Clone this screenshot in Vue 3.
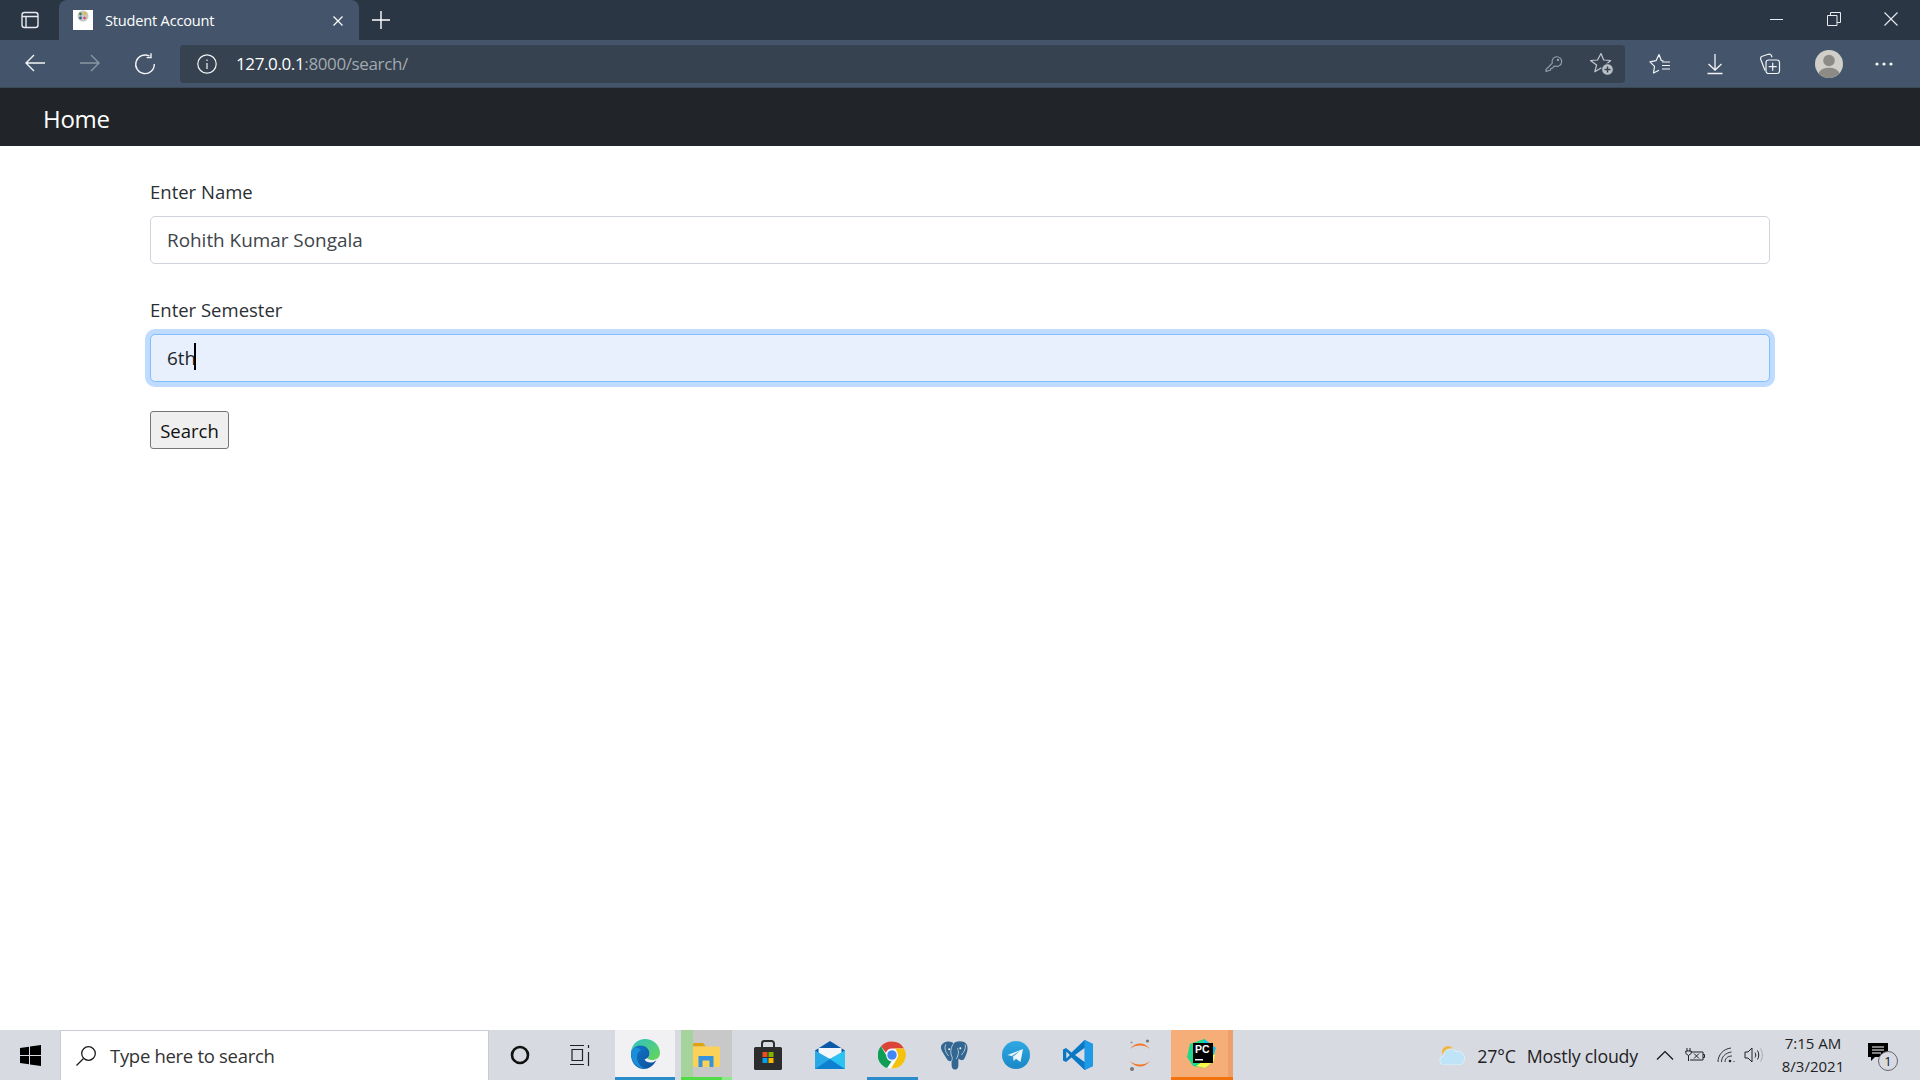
<script setup>
const inputs = [
  { id: 'name', label: 'Enter Name', value: 'Rohith Kumar Songala', focused: false },
  { id: 'sem', label: 'Enter Semester', value: '6th', focused: true },
]
</script>

<template>
  <div class="screen">
    <header class="chrome">
      <div class="tabstrip">
        <div class="strip-btn">
          <svg width="20" height="20" viewBox="0 0 20 20" fill="none" stroke="#e6e9ed" stroke-width="1.4"><rect x="2" y="2.5" width="16" height="15" rx="2.5"/><path d="M2 6.5h16M6 6.5v11"/></svg>
        </div>
        <div class="tab">
          <span class="favicon">
            <svg width="20" height="20" viewBox="0 0 20 20"><rect width="20" height="20" fill="#fff"/><circle cx="10" cy="6" r="5.500" fill="#c9c7bf"/><circle cx="7.500" cy="4" r="1.400" fill="#3f7d5d"/><circle cx="12" cy="3.500" r="1.400" fill="#e0bb3a"/><circle cx="7.500" cy="8" r="1.400" fill="#2f5f9e"/><circle cx="11.500" cy="8" r="1.300" fill="#d8467d"/></svg>
          </span>
          <span class="tab-title">Student Account</span>
          <svg class="tab-close" width="12" height="12" viewBox="0 0 12 12" stroke="#fff" stroke-width="1.2"><path d="M1.5 1.5l9 9M10.5 1.5l-9 9"/></svg>
        </div>
        <div class="newtab">
          <svg width="18" height="18" viewBox="0 0 18 18" stroke="#fff" stroke-width="1.4"><path d="M9 0v18M0 9h18"/></svg>
        </div>
        <div class="winctrls">
          <span class="win"><svg width="14" height="14" viewBox="0 0 14 14" stroke="#e8ebee" stroke-width="1"><path d="M0 7.5h13"/></svg></span>
          <span class="win"><svg width="14" height="14" viewBox="0 0 14 14" fill="none" stroke="#e8ebee" stroke-width="1"><path d="M.5 3.5h9.5v10H.5zM3.500 3.500V.5h10v10H10"/></svg></span>
          <span class="win"><svg width="14" height="14" viewBox="0 0 14 14" stroke="#e8ebee" stroke-width="1.1"><path d="M.5.500l13 13M13.500.5l-13 13"/></svg></span>
        </div>
      </div>
      <div class="toolbar">
        <div class="nav-btns">
          <span class="nav"><svg width="22" height="20" viewBox="0 0 22 20" fill="none" stroke="#f2f4f6" stroke-width="1.400"><path d="M21 10H2M10 2l-8 8 8 8"/></svg></span>
          <span class="nav"><svg width="22" height="20" viewBox="0 0 22 20" fill="none" stroke="#8b96a4" stroke-width="1.400"><path d="M1 10h19M12 2l8 8-8 8"/></svg></span>
          <span class="nav"><svg width="22" height="22" viewBox="0 0 22 22" fill="none" stroke="#f2f4f6" stroke-width="1.400"><path d="M15.500 3.200A9.300 9.300 0 1 0 20.300 11"/><path d="M15.800 .5v4.400h-4.400" transform="translate(1.200 -.3)"/></svg></span>
        </div>
        <div class="address">
          <svg class="info" width="20" height="20" viewBox="0 0 20 20" fill="none" stroke="#f2f4f6" stroke-width="1.200"><circle cx="10" cy="10" r="9.200"/><path d="M10 9v6M10 5.500v1.500"/></svg>
          <span class="url"><span class="host">127.0.0.1</span><span class="rest">:8000/search/</span></span>
          <div class="addr-actions">
            <svg width="18" height="18" viewBox="0 0 18 18" fill="none" stroke="#98a2ad" stroke-width="1.100"><path d="M1 16.500v-2l6.300-6.400a4.800 4.800 0 1 1 3 3l-1.800.300-.6 1.600-2 .4-.4 1.600-1.500.5z"/><circle cx="13" cy="5" r=".6" fill="#98a2ad"/></svg>
            <svg width="24" height="24" viewBox="0 0 24 24" fill="none"><path d="M11 1.500l2.700 6.500 7 .5-5.300 4.500 1.800 6.800-6.200-3.700-6.200 3.700 1.800-6.800L.5 8.500l7-.5z" stroke="#c2c8cf" stroke-width="1.200" stroke-linejoin="round"/><circle cx="17.500" cy="17.500" r="5.800" fill="#b9bfc6" stroke="#36424f" stroke-width="1"/><path d="M17.500 14.500v6M14.500 17.500h6" stroke="#36424f" stroke-width="1.400"/></svg>
          </div>
        </div>
        <div class="tool-icons">
          <span class="tool"><svg width="22" height="22" viewBox="0 0 22 22" fill="none" stroke="#f2f4f6" stroke-width="1.200" stroke-linejoin="round"><path d="M14.500 7.800L12.300 7.500 10 1.500 7 7.700 1 8.800l4.500 4.500L4.500 20l5.500-2.800"/><path d="M13 9h8M13 12.500h8M13 16h8"/></svg></span>
          <span class="tool"><svg width="18" height="22" viewBox="0 0 18 22" fill="none" stroke="#f2f4f6" stroke-width="1.300"><path d="M9 1v16M2.500 11L9 17l6.500-6M1.500 20.500h15"/></svg></span>
          <span class="tool"><svg width="22" height="22" viewBox="0 0 22 22" fill="none" stroke="#f2f4f6" stroke-width="1.200"><path d="M6 17.500L1.800 6.500c-.5-1.500 0-2.700 1.500-3.200l6-2c1.500-.4 2.600 0 3.200 1.500l.5 1.500"/><rect x="7" y="7" width="13.500" height="13.500" rx="2.500"/><path d="M13.700 9.700v8M9.700 13.700h8"/></svg></span>
          <span class="tool avatar"><svg width="28" height="28" viewBox="0 0 28 28"><circle cx="14" cy="14" r="14" fill="#d0cfca"/><circle cx="14" cy="10.500" r="5.800" fill="#8d8b85"/><path d="M3.500 23.200C5.500 19.300 9 17.800 14 17.800s8.500 1.500 10.500 5.400A14 14 0 0 1 14 28a14 14 0 0 1-10.500-4.800z" fill="#8d8b85"/></svg></span>
          <span class="tool"><svg width="18" height="4" viewBox="0 0 18 4" fill="#f2f4f6"><circle cx="2" cy="2" r="1.600"/><circle cx="9" cy="2" r="1.600"/><circle cx="16" cy="2" r="1.600"/></svg></span>
        </div>
      </div>
    </header>

    <nav class="navbar"><a class="brand">Home</a></nav>

    <main class="page">
      <form class="form" @submit.prevent>
        <div v-for="f in inputs" :key="f.id" class="group">
          <label class="label" :for="f.id">{{ f.label }}</label>
          <div class="field-wrap">
            <input :id="f.id" class="field" :class="{ focused: f.focused }" :value="f.value" readonly />
            <span v-if="f.focused" class="caret"></span>
          </div>
        </div>
        <button class="search-btn" type="button">Search</button>
      </form>
    </main>

    <footer class="taskbar">
      <div class="tb-start">
        <svg width="21" height="21" viewBox="0 0 21 21" fill="#000"><path d="M0 3l9-1.300V10H0zM10 1.500L21 0v10H10zM0 11h9v8.300L0 18zM10 11h11v10l-11-1.500z"/></svg>
      </div>
      <div class="tb-search">
        <svg width="22" height="22" viewBox="0 0 22 22" fill="none" stroke="#1a1a1a" stroke-width="1.300"><circle cx="13.500" cy="8.500" r="6.800"/><path d="M8.500 13.500L1.500 20.500"/></svg>
        <span>Type here to search</span>
      </div>
      <div class="tb-slot">
        <svg width="20" height="20" viewBox="0 0 20 20" fill="none" stroke="#111" stroke-width="2.600"><circle cx="10" cy="10" r="8"/></svg>
      </div>
      <div class="tb-slot taskview">
        <svg width="22" height="22" viewBox="0 0 22 22" fill="none" stroke="#222" stroke-width="1.200"><path d="M1 1.500h14M1 20.500h14M3 5.500h10.500v11H3zM19.500 1v3M19.500 8v14"/></svg>
      </div>

      <div class="tb-slot edge">
        <svg width="32" height="32" viewBox="0 0 32 32">
          <defs>
            <linearGradient id="edgeA" x1="0" y1="0" x2="1" y2="1"><stop offset="0" stop-color="#2cc1c4"/><stop offset="1" stop-color="#69d653"/></linearGradient>
            <linearGradient id="edgeB" x1="0" y1="0" x2="1" y2="1"><stop offset="0" stop-color="#1277c9"/><stop offset="1" stop-color="#0c4f9c"/></linearGradient>
          </defs>
          <path d="M2 14C3 6 9 1 16 1c8 0 15 6 15 14 0 5-4 7-8 7-3 0-5-1-5-2.500 2-1 2.500-2.500 2.500-4 0-4-4-7-8-7-5 0-9 2-10.500 5.500z" fill="url(#edgeA)"/>
          <path d="M20.500 15.500c0 3-2 5-5 6 2 4 9 4 12 .5-3 6-8 9-12.500 9C8 31 1 25 2 14c1.500-4 5.500-6.500 9.500-6.500 5 0 9 3.500 9 8z" fill="url(#edgeB)"/>
          <path d="M12 12c-4 2-5 7-3 12 1.500 3.500 4 6 8 6.500C9 31 2 25 2 14c2-4 6-6 10-2z" fill="#1a8fd8"/>
        </svg>
      </div>
      <div class="tb-slot explorer">
        <svg width="27" height="24" viewBox="0 0 27 24">
          <path d="M0 1.500A1.500 1.500 0 0 1 1.500 0H10l3 3.500H0z" fill="#e0a30d"/>
          <path d="M0 3.500h25.500A1.500 1.500 0 0 1 27 5v17.500a1.500 1.500 0 0 1-1.500 1.500H1.500A1.500 1.500 0 0 1 0 22.500z" fill="#fcd15a"/>
          <path d="M5.500 24V13h15v11h-4v-6.500h-7V24z" fill="#3592dc"/>
        </svg>
      </div>
      <div class="tb-slot">
        <svg width="28" height="30" viewBox="0 0 28 30">
          <path d="M8 8V3.500A2.500 2.500 0 0 1 10.500 1h7A2.500 2.500 0 0 1 20 3.500V8" fill="none" stroke="#2e2e2e" stroke-width="2"/>
          <rect y="7" width="28" height="23" rx="1.500" fill="#2d2d2d"/>
          <rect x="8.500" y="12" width="5" height="5" fill="#e8501f"/><rect x="14.500" y="12" width="5" height="5" fill="#7fb400"/>
          <rect x="8.500" y="18" width="5" height="5" fill="#00a1ef"/><rect x="14.500" y="18" width="5" height="5" fill="#ffb800"/>
        </svg>
      </div>
      <div class="tb-slot">
        <svg width="30" height="28" viewBox="0 0 30 28">
          <path d="M0 9.500L15 0l15 9.500V14H0z" fill="#0b5aa8"/>
          <path d="M3.500 7h23v10h-23z" fill="#f3f6fa"/>
          <path d="M0 9.500L15 18l15-8.500V28H0z" fill="#29a8e8"/>
          <path d="M0 28l15-10 15 10z" fill="#0f7fd0"/>
          <path d="M30 9.500V28L15 18z" fill="#2cc3f2"/>
        </svg>
      </div>
      <div class="tb-slot chrome-app">
        <svg width="28" height="28" viewBox="0 0 30 30">
          <circle cx="15" cy="15" r="14.500" fill="#fff"/>
          <path d="M15 .5A14.500 14.500 0 0 1 28 8H15a7 7 0 0 0-6.500 4.500L3.200 5.700A14.500 14.500 0 0 1 15 .5z" fill="#db4437"/>
          <path d="M3.200 5.700L9 15.500a7 7 0 0 0 5.500 6.500L9.700 29A14.500 14.500 0 0 1 3.200 5.700z" fill="#0f9d58"/>
          <path d="M28 8a14.500 14.500 0 0 1-13 21.500h-1l6-10.300A7 7 0 0 0 20 11L18.800 8z" fill="#f4c20d"/>
          <circle cx="15" cy="15" r="5.500" fill="#4285f4" stroke="#e8eefc" stroke-width="1"/>
        </svg>
      </div>
      <div class="tb-slot">
        <svg width="29" height="30" viewBox="0 0 30 30">
          <path d="M3 3C7 0 12 1 14 3c3-3 10-3 13 0 3 4 1 10-1 14-1 3-3 4-5 3l-2-1v7c0 3-2 4-3.500 4-2.500 0-3.500-2-3.500-5v-4c-2 1-4 0-5-2C5 15 1 11 1 7c0-2 1-3 2-4z" fill="#336791"/>
          <path d="M14 3c-2 3-4 8-2 13 1 2 1 3 0 5M18 8c2 3 1 7-1 11M6 4C4 8 6 13 9 16M26 4c1 4-1 8-4 11" fill="none" stroke="#c8d6e2" stroke-width=".9"/>
          <circle cx="9.500" cy="9" r="1" fill="#fff"/><circle cx="21" cy="8" r="1" fill="#fff"/>
        </svg>
      </div>
      <div class="tb-slot">
        <svg width="28" height="28" viewBox="0 0 28 28">
          <defs><linearGradient id="tg" x1="0" y1="0" x2="0" y2="1"><stop offset="0" stop-color="#2fa9e3"/><stop offset="1" stop-color="#1a88c6"/></linearGradient></defs>
          <circle cx="14" cy="14" r="14" fill="url(#tg)"/>
          <path d="M5.500 14L21 8l-2.500 13-4.500-3.200-2 2-.7-4.200 7-6.100-8.600 5.500z" fill="#eef6fb"/>
          <path d="M10.700 15l.7 5 1.300-1.500-.8-4z" fill="#c7dcec"/>
        </svg>
      </div>
      <div class="tb-slot">
        <svg width="30" height="30" viewBox="0 0 30 30">
          <path d="M21.500 0L30 4v22l-8.500 4L8.500 17.500l-5.500 4.500L0 20.500v-11L3 8l5.500 4.500z" fill="#0b78c4"/>
          <path d="M21.500 0L30 4v22l-8.500 4z" fill="#1e9ae6"/>
          <path d="M21.500 8L12 15l9.500 7z" fill="#d8dce4"/>
          <path d="M3.300 11.500l3.500 3.500-3.500 3.500z" fill="#d8dce4"/>
        </svg>
      </div>
      <div class="tb-slot">
        <svg width="24" height="34" viewBox="0 0 24 34">
          <path d="M2 11c3-4 6.500-5.500 10-5.500S19 7 22 11c-3-2.500-6-3.500-10-3.500S5 8.500 2 11zM2 23c3 4 6.500 5.500 10 5.500S19 27 22 23c-3 2.500-6 3.500-10 3.500S5 25.500 2 23z" fill="#f37726"/>
          <circle cx="19.500" cy="3" r="1.600" fill="#767677"/><circle cx="3.500" cy="4.500" r="1.100" fill="#989798"/><circle cx="4" cy="31" r="2" fill="#767677"/>
        </svg>
      </div>
      <div class="tb-slot pycharm">
        <svg width="30" height="30" viewBox="0 0 30 30">
          <path d="M3 5L17 0l11 9-1 13-9 7-12-2-6-9z" fill="#21d789"/>
          <path d="M17 0l12 9-3 7-9-12z" fill="#07c3f2"/>
          <path d="M28 15l-1 7-9 7-9-2 14-9z" fill="#fcf84a"/>
          <rect x="6" y="4" width="20" height="20" fill="#000"/>
          <text x="8" y="14" class="pc-letters">PC</text>
          <rect x="8" y="20" width="8" height="1.500" fill="#f2f2f2"/>
        </svg>
      </div>

      <div class="tray">
        <svg class="weather" width="26" height="20" viewBox="0 0 26 20">
          <circle cx="9" cy="7" r="6" fill="#f2b53a"/>
          <path d="M5.500 20a4.500 4.500 0 0 1-1-8.900A7 7 0 0 1 17 6.500a5.300 5.300 0 0 1 3.500 13.500z" fill="#bfe4f7" stroke="#e5f4fc" stroke-width=".8"/>
        </svg>
        <span class="temp">27°C</span>
        <span class="sky">Mostly cloudy</span>
        <svg class="caret-up" width="18" height="10" viewBox="0 0 18 10" fill="none" stroke="#111" stroke-width="1.200"><path d="M1 9.500l8-8 8 8"/></svg>
        <svg class="tray-ic" width="20" height="14" viewBox="0 0 20 14" fill="none" stroke="#222" stroke-width="1"><path d="M2 0v3M5 0v3M.8 3h5.400v2.500L3.500 7.500.8 5.500zM3.500 7.500V13"/><path d="M6 4h12v8H5"/><path d="M18 6.500h1.500v3H18M9 5.500l5 5M14 5.500l-5 5"/></svg>
        <svg class="tray-ic wifi" width="18" height="16" viewBox="0 0 18 16" fill="none" stroke="#333" stroke-width="1"><path d="M1 15C1 8 6 2 14 1M4.500 15c0-5 3.500-9 10-10M8 15c0-3 2-6 7-6"/><circle cx="13" cy="14" r="1.300" fill="#222" stroke="none"/><path d="M17 15v-1"/></svg>
        <svg class="tray-ic sound" width="20" height="16" viewBox="0 0 20 16" fill="none" stroke="#222" stroke-width="1"><path d="M1 5h3l4-4v14l-4-4H1z"/><path d="M11 5.500c1 1.500 1 3.500 0 5M13.500 3.500c1.700 3 1.700 6 0 9"/><path d="M16.500 1.500c2.500 4 2.500 9 0 13" stroke="#aaa"/></svg>
        <div class="clock"><span>7:15 AM</span><span>8/3/2021</span></div>
        <div class="notif">
          <svg width="20" height="18" viewBox="0 0 20 18"><path d="M0 0h20v14H7l-4 4v-4H0z" fill="#000"/><path d="M4 4h12M4 7h12M4 10h9" stroke="#fff" stroke-width="1"/></svg>
          <span class="badge">1</span>
        </div>
      </div>
    </footer>
  </div>
</template>

<style>
html, body { margin: 0; padding: 0; background: #fff; overflow: hidden; }
</style>

<style scoped>
.screen {
  width: 1920px;
  height: 1080px;
  display: flex;
  flex-direction: column;
  overflow: hidden;
  font-family: "Open Sans", "Noto Sans", sans-serif;
  color: #212529;
  background: #fff;
}
.chrome { flex: none; }
.tabstrip {
  height: 40px;
  background: #2b3644;
  display: flex;
  align-items: stretch;
}
.strip-btn { width: 59px; display: flex; align-items: center; justify-content: center; }
.tab {
  width: 300px;
  background: #44556b;
  border-radius: 8px 8px 0 0;
  display: flex;
  align-items: center;
  padding: 0 15px 0 14px;
  box-sizing: border-box;
  color: #fff;
}
.favicon { display: flex; margin-right: 12px; margin-top: -1px; }
.tab-title { font-size: 14.600px; flex: 1; white-space: nowrap; letter-spacing: -.2px; margin-top: -1px; }
.tab-close { flex: none; margin-top: 1px; }
.newtab { width: 44px; display: flex; align-items: center; justify-content: center; }
.winctrls { margin-left: auto; display: flex; align-items: center; padding-right: 1px; }
.win { width: 57px; display: flex; align-items: center; justify-content: center; margin-top: -3px; }
.toolbar {
  height: 48px;
  box-sizing: border-box;
  background: #44556b;
  border-bottom: 1px solid #3a4858;
  display: flex;
  align-items: center;
}
.nav-btns { display: flex; width: 180px; padding-left: 7px; box-sizing: border-box; }
.nav { width: 55px; display: flex; justify-content: center; }
.address {
  width: 1445px;
  height: 38px;
  background: #36424f;
  border-radius: 4px;
  display: flex;
  align-items: center;
  padding: 0 0 0 17px;
  box-sizing: border-box;
}
.info { flex: none; }
.url { margin-left: 19px; font-size: 17px; letter-spacing: -.38px; white-space: nowrap; }
.host { color: #fff; }
.rest { color: #a2a9b1; }
.addr-actions { margin-left: auto; display: flex; align-items: center; gap: 27px; padding-right: 11px; }
.tool-icons { display: flex; align-items: center; flex: 1; padding-left: 7px; }
.tool { width: 55px; display: flex; justify-content: center; }
.avatar { margin-left: 4px; }
.navbar {
  flex: none;
  height: 58px;
  box-sizing: border-box;
  padding: 2px 0 0 43px;
  background: #212529;
  display: flex;
  align-items: center;
}
.brand { color: #fff; font-size: 24px; letter-spacing: -.3px; }
.page { flex: 1; padding: 33px 150px 0; min-height: 0; }
.form { display: flex; flex-direction: column; }
.group { display: flex; flex-direction: column; margin-bottom: 33px; }
.group + .group { margin-bottom: 29px; }
.label { font-size: 18.500px; line-height: 26px; margin-bottom: 11px; color: #2b2f33; }
.field-wrap { position: relative; }
.field {
  display: block;
  width: 1620px;
  height: 48px;
  box-sizing: border-box;
  padding: 0 16px;
  border: 1.500px solid #ced4da;
  border-radius: 5px;
  font: inherit;
  font-size: 18.900px;
  color: #3e444a;
  background: #fff;
  outline: none;
}
.field.focused {
  background: #e8f0fe;
  border-color: #80bdff;
  box-shadow: 0 0 0 5px #bfdbff;
  color: #212529;
}
.caret {
  position: absolute;
  left: 44px;
  top: 9px;
  width: 2px;
  height: 27px;
  background: #000;
}
.search-btn {
  align-self: flex-start;
  width: 79px;
  height: 38px;
  padding: 0;
  box-sizing: border-box;
  font: inherit;
  font-size: 18.500px;
  color: #111;
  background: #efefef;
  border: 1px solid #767676;
  border-radius: 3px;
}
.taskbar {
  flex: none;
  height: 50px;
  background: #d8dae2;
  display: flex;
  align-items: stretch;
}
.tb-start { width: 60px; display: flex; align-items: center; justify-content: center; }
.tb-search {
  width: 429px;
  background: #fff;
  border: 1px solid #c9cbd2;
  border-bottom: none;
  box-sizing: border-box;
  display: flex;
  align-items: center;
  gap: 13px;
  padding-left: 14px;
  font-size: 18.500px;
  color: #333;
  letter-spacing: -.3px;
}
.tb-slot {
  width: 62px;
  flex: none;
  display: flex;
  align-items: center;
  justify-content: center;
  box-sizing: border-box;
  position: relative;
}
.taskview svg { margin-right: 4px; }
.edge { background: #f1f1f4; margin-left: 2px; width: 60px; border-bottom: 3px solid #2b8ccc; }
.explorer {
  background: linear-gradient(90deg, #a6d39c 0 12px, #c9c8c8 12px);
  margin: 0 5px 0 6px;
  width: 51px;
}
.explorer::after {
  content: "";
  position: absolute;
  left: 0;
  right: 0;
  bottom: 0;
  height: 3px;
  background: linear-gradient(90deg, #4fdc45 0 41px, #8fe88a 41px);
}
.chrome-app::after {
  content: "";
  position: absolute;
  left: 6px;
  right: 5px;
  bottom: 0;
  height: 3px;
  background: #2b8ccc;
}
.pycharm {
  background: linear-gradient(90deg, #f5ae78 0 57px, #eda06c 57px);
  border-bottom: 3px solid #f4720b;
}
.pc-letters { font-family: "Liberation Sans", sans-serif; font-size: 10.500px; font-weight: 700; fill: #fff; }
.tray { margin-left: auto; display: flex; align-items: center; font-size: 17.800px; color: #222; padding-right: 20px; }
.weather { margin-right: 12px; }
.temp { margin-right: 11px; letter-spacing: -.2px; padding-top: 2px; }
.sky { margin-right: 18px; letter-spacing: -.2px; padding-top: 2px; }
.caret-up { margin-right: 11px; }
.tray-ic { margin-right: 12px; }
.tray-ic.wifi { margin-right: 9px; }
.tray-ic.sound { margin-right: 16px; }
.clock { display: flex; flex-direction: column; align-items: center; font-size: 15px; line-height: 23px; width: 66px; margin-right: 10px; white-space: nowrap; }
.notif { position: relative; width: 44px; display: flex; justify-content: center; margin-top: -6px; }
.badge {
  position: absolute;
  left: 22px;
  top: 8px;
  width: 20px;
  height: 20px;
  box-sizing: border-box;
  border: 1px solid #666;
  border-radius: 50%;
  background: #d8dae2;
  font-size: 13px;
  line-height: 18px;
  text-align: center;
  color: #111;
}
</style>
